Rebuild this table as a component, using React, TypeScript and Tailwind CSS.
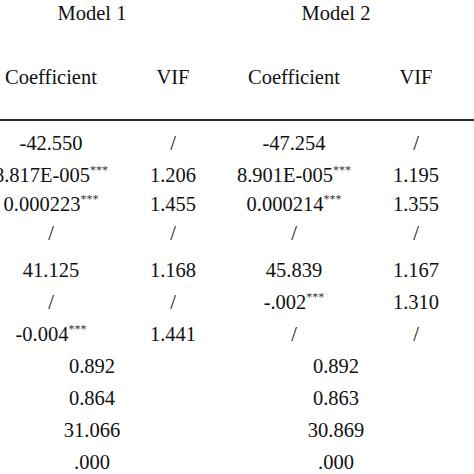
import React from "react";

type Cell = { v: string; s?: boolean };

const rows: { h: string; cells: Cell[] }[] = [
  { h: "h-[32px]", cells: [{ v: "-42.550" }, { v: "/" }, { v: "-47.254" }, { v: "/" }] },
  { h: "h-[29px]", cells: [{ v: "8.817E-005", s: true }, { v: "1.206" }, { v: "8.901E-005", s: true }, { v: "1.195" }] },
  { h: "h-[29px]", cells: [{ v: "0.000223", s: true }, { v: "1.455" }, { v: "0.000214", s: true }, { v: "1.355" }] },
  { h: "h-[37px]", cells: [{ v: "/" }, { v: "/" }, { v: "/" }, { v: "/" }] },
  { h: "h-[32px]", cells: [{ v: "41.125" }, { v: "1.168" }, { v: "45.839" }, { v: "1.167" }] },
  { h: "h-[32px]", cells: [{ v: "/" }, { v: "/" }, { v: "-.002", s: true }, { v: "1.310" }] },
  { h: "h-[32px]", cells: [{ v: "-0.004", s: true }, { v: "1.441" }, { v: "/" }, { v: "/" }] },
];

const stats: [string, string][] = [
  ["0.892", "0.892"],
  ["0.864", "0.863"],
  ["31.066", "30.869"],
  [".000", ".000"],
];

function Val({ c }: { c: Cell }) {
  return (
    <div className="text-center whitespace-nowrap">
      {c.v}
      {c.s && <sup className="text-[12px] top-[-8px] text-[#333]">***</sup>}
    </div>
  );
}

const grid = "grid grid-cols-[162px_82px_160px_84px] ml-[-30px] w-[488px]";

export default function App() {
  return (
    <div className="w-[474px] h-[474px] overflow-hidden bg-white text-[#111] text-[20.5px] font-['Liberation_Serif','Times_New_Roman',serif]">
      <div className={`${grid} h-[26px] leading-[26px]`}>
        <div className="col-span-2 text-center">Model 1</div>
        <div className="col-span-2 text-center">Model 2</div>
      </div>
      <div className={`${grid} mt-[35px] h-[32px] leading-[32px]`}>
        <div className="text-center">Coefficient</div>
        <div className="text-center">VIF</div>
        <div className="text-center">Coefficient</div>
        <div className="text-center">VIF</div>
      </div>
      <div className="mt-[26px] h-[2px] bg-[#2a2a2a]" />
      <div className="mt-[6px]">
        {rows.map((r, i) => (
          <div key={i} className={`${grid} ${r.h} leading-[32px] items-start`}>
            {r.cells.map((c, j) => (
              <Val key={j} c={c} />
            ))}
          </div>
        ))}
        {stats.map((s, i) => (
          <div key={i} className={`${grid} h-[32px] leading-[32px]`}>
            <div className="col-span-2 text-center">{s[0]}</div>
            <div className="col-span-2 text-center">{s[1]}</div>
          </div>
        ))}
      </div>
    </div>
  );
}
